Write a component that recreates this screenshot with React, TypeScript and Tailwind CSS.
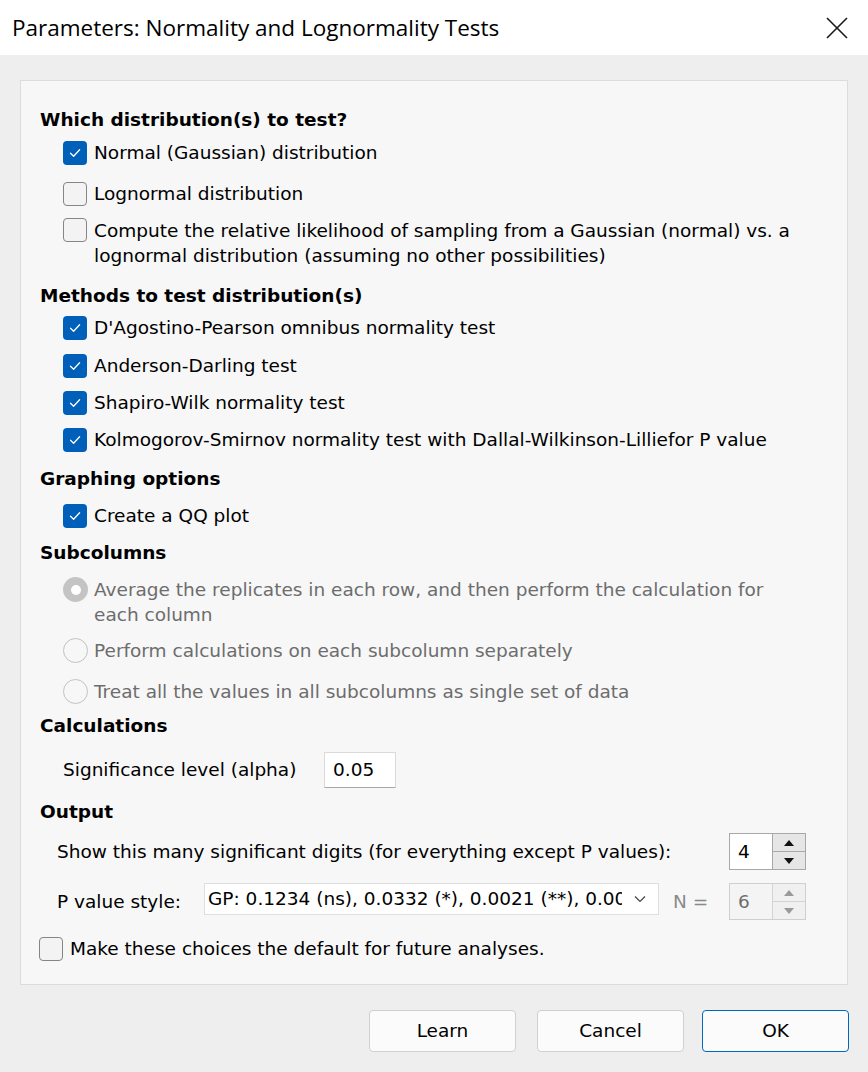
import React from 'react';

const FONT = { fontFamily: '"DejaVu Sans", Verdana, sans-serif' };

function Check({ checked = false }: { checked?: boolean }) {
  if (checked) {
    return (
      <span className="flex h-6 w-6 shrink-0 items-center justify-center rounded-[4px] bg-[#005fb8]">
        <svg width="14" height="14" viewBox="0 0 14 14" fill="none">
          <path d="M2.5 7.2 5.6 10.2 11.6 3.8" stroke="white" strokeWidth="1.3" strokeLinecap="round" strokeLinejoin="round" />
        </svg>
      </span>
    );
  }
  return <span className="block h-6 w-6 shrink-0 rounded-[4px] border border-[#858585] bg-[#f3f3f3]" />;
}

function Radio({ selected = false }: { selected?: boolean }) {
  if (selected) {
    return (
      <span className="flex h-[25px] w-[25px] shrink-0 items-center justify-center rounded-full bg-[#c4c4c4]">
        <span className="block h-[10px] w-[10px] rounded-full bg-white" />
      </span>
    );
  }
  return <span className="block h-[25px] w-[25px] shrink-0 rounded-full border border-[#c2c2c2] bg-[#f7f7f7]" />;
}

function Heading({ children, className = '' }: { children: React.ReactNode; className?: string }) {
  return <div className={`h-6 leading-6 font-bold text-black ${className}`}>{children}</div>;
}

function CheckRow({ label, checked, className = '' }: { label: React.ReactNode; checked?: boolean; className?: string }) {
  return (
    <div className={`ml-[23px] flex items-start gap-[7px] ${className}`}>
      <Check checked={checked} />
      <span className="leading-6 text-black">{label}</span>
    </div>
  );
}

function RadioRow({ label, selected, className = '' }: { label: React.ReactNode; selected?: boolean; className?: string }) {
  return (
    <div className={`ml-[23px] flex items-start gap-[6px] ${className}`}>
      <Radio selected={selected} />
      <span className="leading-[25px] text-[#6d6d6d]">{label}</span>
    </div>
  );
}

function Spinner({ value, disabled = false }: { value: string; disabled?: boolean }) {
  const arrow = disabled ? '#9a9a9a' : '#111';
  return (
    <div className={`flex h-[37px] w-[77px] shrink-0 border ${disabled ? 'border-[#cfcfcf] bg-[#f4f4f4]' : 'border-[#a8a8a8] bg-white'}`}>
      <div className={`flex flex-1 items-center pl-[8px] ${disabled ? 'text-[#6d6d6d]' : 'text-black'}`}>{value}</div>
      <div className={`flex w-[33px] flex-col border-l ${disabled ? 'border-[#d4d4d4]' : 'border-[#a8a8a8]'}`}>
        <div className={`flex flex-1 items-center justify-center border-b ${disabled ? 'border-[#d4d4d4] bg-[#f0f0f0]' : 'border-[#a8a8a8] bg-[#e6e6e6]'}`}>
          <svg width="10" height="6" viewBox="0 0 10 6"><path d="M0 6 5 0 10 6Z" fill={arrow} /></svg>
        </div>
        <div className={`flex flex-1 items-center justify-center ${disabled ? 'bg-[#f0f0f0]' : 'bg-[#e6e6e6]'}`}>
          <svg width="10" height="6" viewBox="0 0 10 6"><path d="M0 0 5 6 10 0Z" fill={arrow} /></svg>
        </div>
      </div>
    </div>
  );
}

function DialogButton({ label, primary = false, className = '' }: { label: string; primary?: boolean; className?: string }) {
  return (
    <button
      type="button"
      className={`h-[42px] w-[147px] rounded-[4px] border bg-[#fbfbfb] text-black ${primary ? 'border-[#0067c0]' : 'border-[#d0d0d0]'} ${className}`}
    >
      {label}
    </button>
  );
}

export default function App() {
  return (
    <div className="flex h-[1072px] w-[868px] flex-col bg-[#eeeeee] text-[18.5px]" style={FONT}>
      <div className="flex h-[55px] shrink-0 items-center justify-between bg-white pl-[12px] pr-[20px]">
        <span className="text-[22.5px] text-black" style={{ fontFamily: '"Open Sans", "Noto Sans", sans-serif' }}>
          Parameters: Normality and Lognormality Tests
        </span>
        <svg width="22" height="22" viewBox="0 0 22 22">
          <path d="M1 1 21 21M21 1 1 21" stroke="#1a1a1a" strokeWidth="1.6" />
        </svg>
      </div>

      <div className="mx-[20px] mt-[25px] border border-[#dcdcdc] bg-[#f7f7f7] pb-[23px] pl-[19px] pr-[19px] pt-[27px]">
        <Heading>Which distribution(s) to test?</Heading>
        <CheckRow className="mt-[9px]" checked label="Normal (Gaussian) distribution" />
        <CheckRow className="mt-[17px]" label="Lognormal distribution" />
        <div className="ml-[23px] mt-[12px] flex items-start gap-[7px]">
          <Check />
          <span className="leading-[25px] text-black">
            Compute the relative likelihood of sampling from a Gaussian (normal) vs. a
            <br />
            lognormal distribution (assuming no other possibilities)
          </span>
        </div>

        <Heading className="mt-[16px]">Methods to test distribution(s)</Heading>
        <CheckRow className="mt-[8px]" checked label="D'Agostino-Pearson omnibus normality test" />
        <CheckRow className="mt-[14px]" checked label="Anderson-Darling test" />
        <CheckRow className="mt-[13px]" checked label="Shapiro-Wilk normality test" />
        <CheckRow className="mt-[13px]" checked label="Kolmogorov-Smirnov normality test with Dallal-Wilkinson-Lilliefor P value" />

        <Heading className="mt-[15px]">Graphing options</Heading>
        <CheckRow className="mt-[13px]" checked label="Create a QQ plot" />

        <Heading className="mt-[13px]">Subcolumns</Heading>
        <RadioRow
          className="mt-[12px]"
          selected
          label={
            <>
              Average the replicates in each row, and then perform the calculation for
              <br />
              each column
            </>
          }
        />
        <RadioRow className="mt-[11px]" label="Perform calculations on each subcolumn separately" />
        <RadioRow className="mt-[16px]" label="Treat all the values in all subcolumns as single set of data" />

        <Heading className="mt-[10px]">Calculations</Heading>
        <div className="ml-[23px] mt-[14px] flex h-[36px] items-center">
          <span className="w-[261px] text-black">Significance level (alpha)</span>
          <div className="flex h-[36px] w-[72px] items-center border border-[#dadada] border-b-[#a8a8a8] bg-white pl-[8px] text-black">
            0.05
          </div>
        </div>

        <Heading className="mt-[12px]">Output</Heading>
        <div className="ml-[17px] mt-[9px] flex h-[37px] items-center">
          <span className="w-[672px] text-black">Show this many significant digits (for everything except P values):</span>
          <Spinner value="4" />
        </div>
        <div className="ml-[17px] mt-[13px] flex h-[37px] items-center">
          <span className="w-[147px] shrink-0 text-black">P value style:</span>
          <div className="flex h-[32px] w-[455px] shrink-0 items-center self-start border border-[#dedede] bg-white pl-[3px]">
            <span className="min-w-0 flex-1 overflow-hidden whitespace-nowrap text-black">
              GP: 0.1234 (ns), 0.0332 (*), 0.0021 (**), 0.0001 (***)
            </span>
            <svg className="mx-[12px] shrink-0" width="12" height="8" viewBox="0 0 12 8">
              <path d="M1 1.5 6 6.5 11 1.5" fill="none" stroke="#444" strokeWidth="1.2" />
            </svg>
          </div>
          <span className="w-[70px] shrink-0 pl-[14px] text-[#8a8a8a]">N =</span>
          <Spinner value="6" disabled />
        </div>

        <div className="-ml-px mt-[17px] flex items-start gap-[7px]">
          <Check />
          <span className="leading-6 text-black">Make these choices the default for future analyses.</span>
        </div>
      </div>

      <div className="mt-[25px] flex justify-end pr-[19px]">
        <DialogButton label="Learn" />
        <DialogButton label="Cancel" className="ml-[21px]" />
        <DialogButton label="OK" primary className="ml-[18px]" />
      </div>
    </div>
  );
}
